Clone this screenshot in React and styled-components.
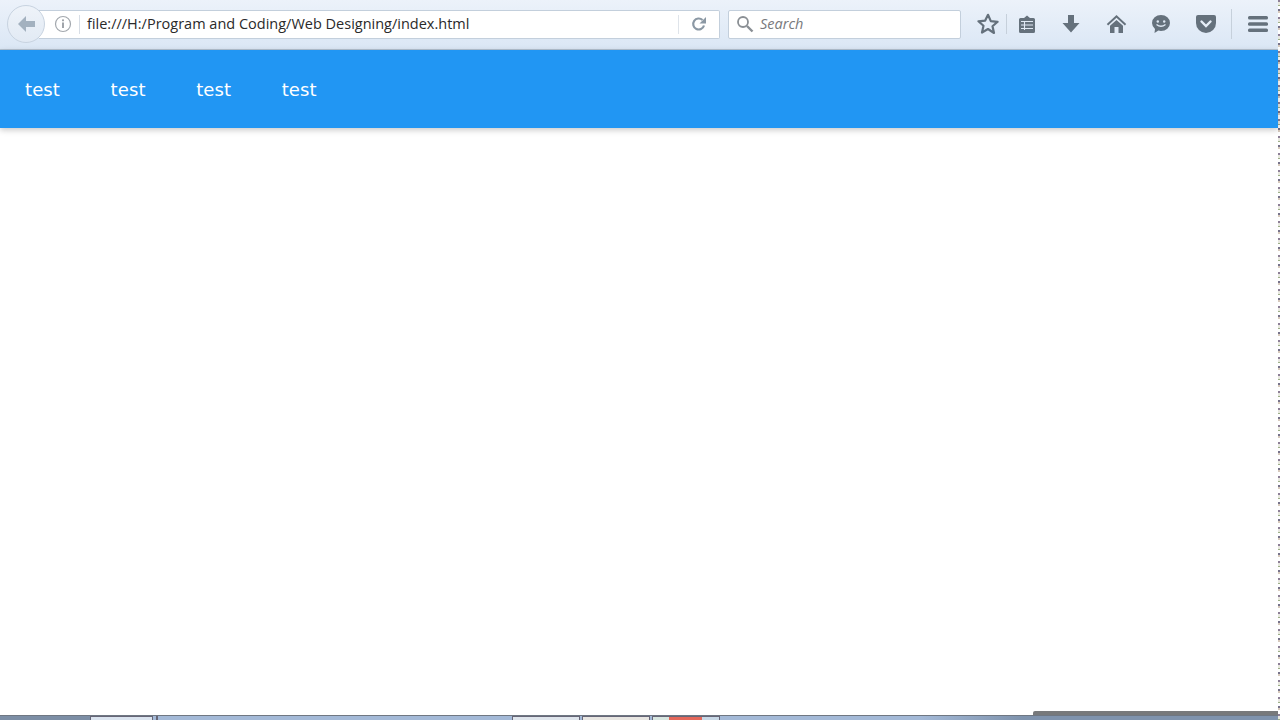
import styled, { createGlobalStyle } from "styled-components";

const Global = createGlobalStyle`
  html, body { margin: 0; padding: 0; background: #fff; }
  #root { width: 1280px; height: 720px; overflow: hidden; }
`;

const Page = styled.div`
  display: flex;
  width: 1280px;
  height: 720px;
`;

const Left = styled.div`
  flex: 1;
  display: flex;
  flex-direction: column;
  min-width: 0;
`;

// the speckled edge at the right of the capture
const Noise = styled.div`
  width: 2px;
  background: repeating-linear-gradient(
    180deg,
    #8d7f96 0 2px,
    #e8e8e0 2px 5px,
    #9db088 5px 6px,
    #ffffff 6px 9px,
    #77738a 9px 11px,
    #d6c9bc 11px 13px,
    #ffffff 13px 17px
  );
`;

const Toolbar = styled.div`
  height: 50px;
  flex-shrink: 0;
  box-sizing: border-box;
  display: flex;
  align-items: center;
  padding: 0 0 1px 7px;
  background: linear-gradient(180deg, #ecf2fa 0%, #dbe7f5 100%);
  border-bottom: 1px solid #b4c2d0;
`;

const BackBtn = styled.div`
  width: 38px;
  height: 38px;
  flex-shrink: 0;
  box-sizing: border-box;
  border-radius: 50%;
  border: 1px solid #c8d3e0;
  background: linear-gradient(180deg, #eef3f9, #e2eaf4);
  display: flex;
  align-items: center;
  justify-content: center;
  position: relative;
  z-index: 1;
`;

const UrlBar = styled.div`
  width: 681px;
  height: 29px;
  margin-left: -6px;
  flex-shrink: 0;
  box-sizing: border-box;
  display: flex;
  align-items: center;
  background: #fff;
  border: 1px solid #c3cfdc;
  border-left: none;
  border-radius: 0 2px 2px 0;
`;

const InfoSlot = styled.div`
  width: 41px;
  height: 19px;
  padding-left: 15px;
  box-sizing: border-box;
  flex-shrink: 0;
  display: flex;
  align-items: center;
  border-right: 1px solid #d8dee6;
`;

const UrlText = styled.div`
  flex: 1;
  padding-left: 7px;
  font: 14.5px/1 "Open Sans", "Liberation Sans", sans-serif;
  color: #2a2a2a;
  white-space: nowrap;
`;

const ReloadSlot = styled.div`
  width: 41px;
  height: 19px;
  flex-shrink: 0;
  box-sizing: border-box;
  display: flex;
  align-items: center;
  justify-content: center;
  border-left: 1px solid #dfe4ea;
`;

const SearchBar = styled.div`
  width: 233px;
  height: 29px;
  margin-left: 8px;
  flex-shrink: 0;
  box-sizing: border-box;
  display: flex;
  align-items: center;
  gap: 6px;
  padding-left: 7px;
  background: #fff;
  border: 1px solid #c3cfdc;
  border-radius: 2px;
`;

const SearchText = styled.span`
  font: italic 14.5px/1 "Open Sans", "Liberation Sans", sans-serif;
  color: #77797c;
`;

const Tools = styled.div`
  display: flex;
  align-items: center;
  height: 100%;
  margin-left: 9px;
`;

const Tool = styled.div`
  width: ${(p) => p.$w}px;
  margin-left: ${(p) => p.$gap || 0}px;
  height: 30px;
  flex-shrink: 0;
  box-sizing: border-box;
  display: flex;
  align-items: center;
  justify-content: center;
`;

const Sep = styled.div`
  width: 1px;
  height: ${(p) => p.$h}px;
  margin-left: ${(p) => p.$gap || 0}px;
  flex-shrink: 0;
  background: #c6d0db;
`;

const Nav = styled.nav`
  height: 78px;
  flex-shrink: 0;
  display: flex;
  align-items: center;
  gap: 50.5px;
  padding-left: 25px;
  padding-top: 1px;
  box-sizing: border-box;
  background: #2196f3;
  box-shadow: 0 2px 6px rgba(0, 0, 0, 0.22);
  position: relative;
`;

const NavLink = styled.a`
  font: 18px/1 "DejaVu Sans", sans-serif;
  letter-spacing: 0.12px;
  color: #fff;
`;

const Main = styled.main`
  flex: 1;
  display: flex;
  justify-content: flex-end;
  align-items: flex-end;
  background: #fff;
`;

const Scrollbar = styled.div`
  width: 245px;
  height: 4px;
  background: #77797b;
  border-radius: 2px 0 0 0;
`;

const Taskbar = styled.div`
  height: 5px;
  flex-shrink: 0;
  display: flex;
  box-sizing: border-box;
  border-top: 1px solid #6f7782;
  background: linear-gradient(90deg, #a3b9d7 0 72%, #7f93ad 80% 100%);
`;

const StartArea = styled.div`
  width: 90px;
  background: #7c8ea5;
`;

const TaskTab = styled.div`
  width: ${(p) => p.$w}px;
  margin-left: ${(p) => p.$gap || 0}px;
  box-sizing: border-box;
  border: 1px solid #667;
  border-bottom: none;
  background: ${(p) => p.$bg};
`;

const stroke = "#65717c";

function Back() {
  return (
    <svg width="22" height="22" viewBox="0 0 22 22">
      <path d="M11 3 3 11l8 8v-5h9V8h-9z" fill="#a3b1bf" />
    </svg>
  );
}

function Info() {
  return (
    <svg width="18" height="18" viewBox="0 0 18 18" fill="none">
      <circle cx="9" cy="9" r="7.5" stroke="#a3a8ae" strokeWidth="1.2" />
      <rect x="8.1" y="7.5" width="1.8" height="5.5" fill="#969ba1" />
      <rect x="8.1" y="4.4" width="1.8" height="1.8" fill="#969ba1" />
    </svg>
  );
}

function Reload() {
  return (
    <svg width="16" height="16" viewBox="0 0 16 16" fill="none">
      <path d="M13 9.5A5.5 5.5 0 1 1 11.5 4" stroke="#8b98a4" strokeWidth="2.2" />
      <path d="M15 1v6.5H8.5z" fill="#8b98a4" />
    </svg>
  );
}

function Lens() {
  return (
    <svg width="18" height="18" viewBox="0 0 18 18" fill="none">
      <circle cx="7" cy="7" r="5" stroke="#8a8f94" strokeWidth="1.8" />
      <path d="M11 11l5.5 5.5" stroke="#8a8f94" strokeWidth="2.4" />
    </svg>
  );
}

function Star() {
  return (
    <svg width="24" height="24" viewBox="0 0 24 24" fill="none">
      <path
        d="M12 2.8l2.8 6.3 6.8.7-5.1 4.5 1.5 6.7L12 17l-6 3.5 1.5-6.7-5.1-4.5 6.8-.7z"
        stroke={stroke}
        strokeWidth="2.2"
        strokeLinejoin="round"
      />
    </svg>
  );
}

function Reading() {
  return (
    <svg width="20" height="20" viewBox="0 0 20 20">
      <path
        d="M3.5 4H7l3-2.5L13 4h3.5A1.5 1.5 0 0 1 18 5.5v12a1.5 1.5 0 0 1-1.5 1.5h-13A1.5 1.5 0 0 1 2 17.5v-12A1.5 1.5 0 0 1 3.5 4z"
        fill={stroke}
      />
      <path d="M4 7.5h12M4 11h12M4 14.5h12" stroke="#dfe8f3" strokeWidth="1.1" />
      <path d="M7.5 7v9" stroke="#dfe8f3" strokeWidth="1.1" />
    </svg>
  );
}

function Download() {
  return (
    <svg width="20" height="20" viewBox="0 0 20 20">
      <path d="M7 1h6v8h5.5L10 18.5 1.500 9H7z" fill={stroke} />
    </svg>
  );
}

function Home() {
  return (
    <svg width="21" height="20" viewBox="0 0 21 20">
      <path d="M10.5 1 .8 10l1.3 1.4 8.400-7.600 8.400 7.600 1.300-1.400z" fill={stroke} />
      <path d="M10.5 6 4 11.800V19h4.500v-6h4v6H17v-7.200z" fill={stroke} />
    </svg>
  );
}

function Chat() {
  return (
    <svg width="20" height="20" viewBox="0 0 20 20">
      <path
        d="M10 1a9 8 0 0 1 0 16c-.9 0-1.8-.1-2.6-.4L3.500 19l.5-4A8 8 0 0 1 1 9a9 8 0 0 1 9-8z"
        fill={stroke}
      />
      <circle cx="6.8" cy="7.5" r="1.2" fill="#dfe8f3" />
      <circle cx="13.2" cy="7.5" r="1.2" fill="#dfe8f3" />
      <path d="M5.5 10.5q4.5 3.5 9 0" stroke="#dfe8f3" strokeWidth="1.4" fill="none" />
    </svg>
  );
}

function Pocket() {
  return (
    <svg width="22" height="20" viewBox="0 0 22 20">
      <path d="M3 1h16a2 2 0 0 1 2 2v6a10 10 0 0 1-20 0V3a2 2 0 0 1 2-2z" fill={stroke} />
      <path d="M6.500 7.500 11 12l4.500-4.500" stroke="#e6eef7" strokeWidth="2.4" fill="none" strokeLinecap="round" />
    </svg>
  );
}

function Burger() {
  return (
    <svg width="20" height="18" viewBox="0 0 20 18">
      <rect x="0" y="1" width="20" height="3.5" rx="1.5" fill={stroke} />
      <rect x="0" y="7.3" width="20" height="3.5" rx="1.5" fill={stroke} />
      <rect x="0" y="13.5" width="20" height="3.5" rx="1.5" fill={stroke} />
    </svg>
  );
}

export default function App() {
  const links = ["test", "test", "test", "test"];
  return (
    <Page>
      <Global />
      <Left>
        <Toolbar>
          <BackBtn>
            <Back />
          </BackBtn>
          <UrlBar>
            <InfoSlot>
              <Info />
            </InfoSlot>
            <UrlText>file:///H:/Program and Coding/Web Designing/index.html</UrlText>
            <ReloadSlot>
              <Reload />
            </ReloadSlot>
          </UrlBar>
          <SearchBar>
            <Lens />
            <SearchText>Search</SearchText>
          </SearchBar>
          <Tools>
            <Tool $w={36}>
              <Star />
            </Tool>
            <Sep $h={20} />
            <Tool $w={39}>
              <Reading />
            </Tool>
            <Tool $w={44} $gap={3}>
              <Download />
            </Tool>
            <Tool $w={46}>
              <Home />
            </Tool>
            <Tool $w={44}>
              <Chat />
            </Tool>
            <Tool $w={46}>
              <Pocket />
            </Tool>
            <Sep $h={30} $gap={2} />
            <Tool $w={50} $gap={1}>
              <Burger />
            </Tool>
          </Tools>
        </Toolbar>
        <Nav>
          {links.map((l, i) => (
            <NavLink key={i}>{l}</NavLink>
          ))}
        </Nav>
        <Main>
          <Scrollbar />
        </Main>
        <Taskbar>
          <StartArea />
          <TaskTab $w={63} $bg="#dbe4ef" />
          <TaskTab $w={2} $gap={3} $bg="#cfd9e6" />
          <TaskTab $w={68} $gap={354} $bg="#dfe5ec" />
          <TaskTab $w={68} $gap={2} $bg="#e8e6e2" />
          <TaskTab $w={68} $gap={2} $bg="linear-gradient(90deg,#d8e6e0 0 25%,#e4675a 25% 75%,#c8d8e6 75%)" />
        </Taskbar>
      </Left>
      <Noise />
    </Page>
  );
}
